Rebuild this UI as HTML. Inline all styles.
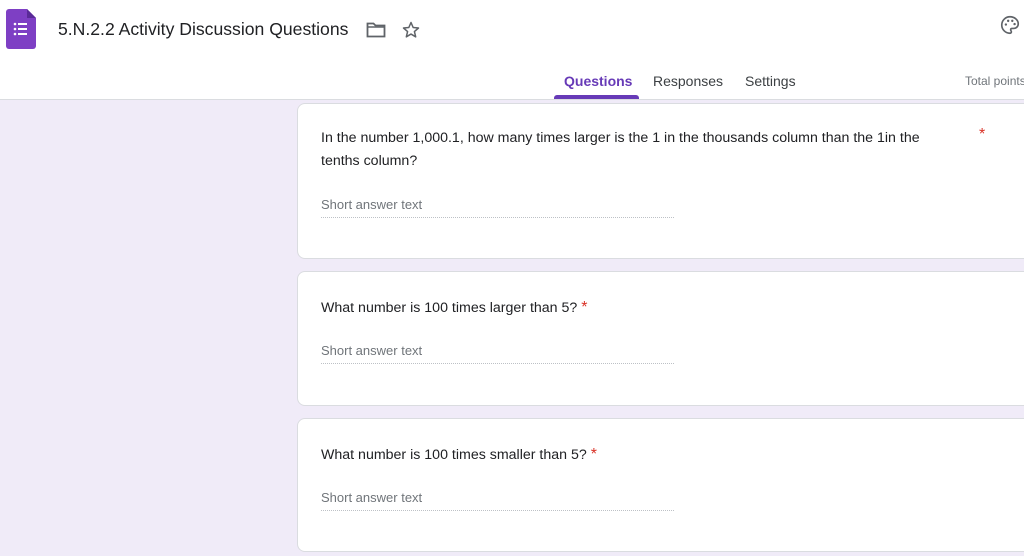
<!DOCTYPE html>
<html><head><style>
body{margin:0;width:1024px;height:556px;overflow:hidden;background:#f0ebf8;font-family:"Liberation Sans",Arial,sans-serif;position:relative}
.hdr{position:absolute;left:0;top:0;width:1024px;height:99px;background:#fff;border-bottom:1px solid #dadce0}
.title{position:absolute;left:58px;top:19px;font-size:17.6px;color:#202124}
.tab{position:absolute;top:73px;font-size:14px;color:#3c4043}
.card{position:absolute;left:297px;width:740px;background:#fff;border:1px solid #dadce0;border-radius:8px;box-sizing:border-box}
.q{position:absolute;left:23px;font-size:14.2px;color:#202124;line-height:23px}
.star{color:#d93025;font-size:16px}
.sa{position:absolute;left:23px;width:353px;font-size:13px;color:#70757a;border-bottom:1px dotted #bdc1c6;padding-bottom:5px}
</style></head><body>
<div class="hdr">
<svg style="position:absolute;left:6px;top:9px" width="30" height="40" viewBox="0 0 30 40"><path d="M3 0h18l9 9v28a3 3 0 0 1-3 3H3a3 3 0 0 1-3-3V3a3 3 0 0 1 3-3z" fill="#7e3fc4"/><path d="M21 0l9 9h-9z" fill="#5a2a98"/><g fill="#fff"><circle cx="9" cy="15" r="1.3"/><circle cx="9" cy="20" r="1.3"/><circle cx="9" cy="25" r="1.3"/><rect x="12" y="14" width="9" height="2"/><rect x="12" y="19" width="9" height="2"/><rect x="12" y="24" width="9" height="2"/></g></svg>
<div class="title">5.N.2.2 Activity Discussion Questions</div>
<svg style="position:absolute;left:366px;top:21px" width="20" height="18" viewBox="0 0 20 18"><path d="M1.5 2.5h6l2 2h9v11h-17z" fill="none" stroke="#5f6368" stroke-width="1.8"/><path d="M1.5 6h17" stroke="#5f6368" stroke-width="1.5"/></svg>
<svg style="position:absolute;left:401px;top:20px" width="20" height="20" viewBox="0 0 24 24"><path d="M12 3l2.6 6 6.4.6-4.9 4.3 1.5 6.3L12 16.9 6.4 20.2l1.5-6.3L3 9.6 9.4 9z" fill="none" stroke="#5f6368" stroke-width="1.8" stroke-linejoin="round"/></svg>
<svg style="position:absolute;left:999px;top:14px" width="22" height="22" viewBox="0 0 24 24"><path d="M12 3a9 9 0 0 0 0 18c1 0 1.5-.8 1.5-1.5 0-1-.8-1.4-.8-2.2 0-.9.7-1.5 1.6-1.5H16a5 5 0 0 0 5-5C21 6.5 17 3 12 3z" fill="none" stroke="#5f6368" stroke-width="1.8"/><g fill="#5f6368"><circle cx="7.5" cy="11.5" r="1.3"/><circle cx="10" cy="7.5" r="1.3"/><circle cx="14.5" cy="7.5" r="1.3"/><circle cx="17" cy="11" r="1.3"/></g></svg>
<div class="tab" style="left:564px;color:#673ab7;font-weight:bold">Questions</div>
<div style="position:absolute;left:554px;top:95px;width:85px;height:4px;background:#673ab7;border-radius:3px 3px 0 0"></div>
<div class="tab" style="left:653px">Responses</div>
<div class="tab" style="left:745px">Settings</div>
<div style="position:absolute;left:965px;top:74px;font-size:12px;color:#70757a;white-space:nowrap">Total points</div>
</div>
<div class="card" style="top:103px;height:156px">
<div class="q" style="top:23px;width:625px">In the number 1,000.1, how many times larger is the 1 in the thousands column than the 1in the tenths column?</div>
<div class="star" style="position:absolute;left:681px;top:22px">*</div>
<div class="sa" style="top:93px">Short answer text</div>
</div>
<div class="card" style="top:271px;height:135px">
<div class="q" style="top:24px">What number is 100 times larger than 5? <span class="star">*</span></div>
<div class="sa" style="top:71px">Short answer text</div>
</div>
<div class="card" style="top:418px;height:134px">
<div class="q" style="top:24px">What number is 100 times smaller than 5? <span class="star">*</span></div>
<div class="sa" style="top:71px">Short answer text</div>
</div>
</body></html>
